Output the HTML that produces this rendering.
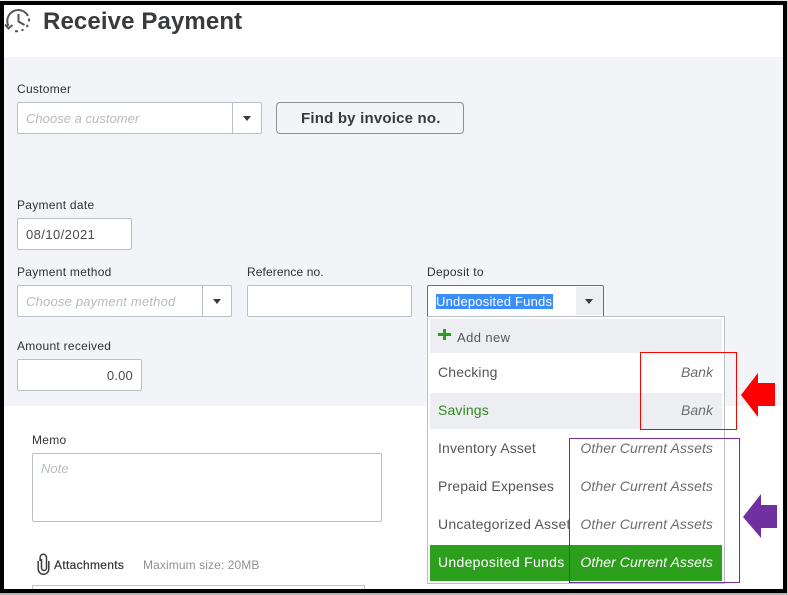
<!DOCTYPE html>
<html><head><meta charset="utf-8"><style>
html,body{margin:0;padding:0}
body{width:788px;height:595px;position:relative;overflow:hidden;background:#fff;font-family:"Liberation Sans",sans-serif;color:#393a3d}
div,span.t{position:absolute;box-sizing:border-box}
.t{white-space:nowrap;line-height:16px;font-size:12.5px}
.l{font-size:12px;color:#2f3033;letter-spacing:.28px}
.box{background:#fff;border:1px solid #babec5;border-radius:2px}
.ph{font-style:italic;color:#b8bac0;font-size:13px;letter-spacing:.03px}
.it{font-size:14px;color:#55565b;letter-spacing:.15px}
.ty{font-size:14px;font-style:italic;color:#6b6c72;letter-spacing:.03px}
.car{width:0;height:0;border-left:4.5px solid transparent;border-right:4.5px solid transparent;border-top:5px solid #393a3d}
.k{background:#000}
</style></head><body>
<div style="left:0;top:57px;width:788px;height:349px;background:#f3f4f8"></div>

<svg style="position:absolute;left:0;top:0" width="36" height="36" viewBox="0 0 36 36" fill="none" stroke="#55565b" stroke-width="2">
<path d="M8.500 26 A10.500 10.500 0 1 1 28 16"/>
<path d="M29 18.500V21.500M28 25 L26.500 27M23.500 29.500L21.500 30.500M18 31.200H15"/>
<path d="M18.500 14V21.500L24.500 25"/>
<path d="M5 24.500L8.500 28.500L12.500 25" stroke-width="2"/>
</svg>
<span class="t" style="left:43px;top:8px;font-size:24px;line-height:28px;font-weight:bold;color:#393a3d;letter-spacing:.12px">Receive Payment</span>

<span class="t l" style="left:17px;top:81px">Customer</span>
<div class="box" style="left:17px;top:102px;width:245px;height:32px"></div>
<div style="left:232px;top:103px;width:1px;height:30px;background:#babec5"></div>
<div class="car" style="left:243px;top:116px"></div>
<span class="t ph" style="left:26px;top:111px">Choose a customer</span>

<div style="left:276px;top:102px;width:188px;height:32px;border:1px solid #8d9096;border-radius:4px"></div>
<span class="t" style="left:301px;top:111px;font-size:15px;font-weight:bold;color:#393a3d;letter-spacing:.2px">Find by invoice no.</span>

<span class="t l" style="left:17px;top:197px">Payment date</span>
<div class="box" style="left:17px;top:218px;width:115px;height:32px"></div>
<span class="t" style="left:26px;top:227px;font-size:13px;letter-spacing:.42px;color:#4a4b50">08/10/2021</span>

<span class="t l" style="left:17px;top:264px">Payment method</span>
<div class="box" style="left:17px;top:285px;width:215px;height:32px"></div>
<div style="left:202px;top:286px;width:1px;height:30px;background:#babec5"></div>
<div class="car" style="left:213px;top:299px"></div>
<span class="t ph" style="left:26px;top:294px;letter-spacing:.2px">Choose payment method</span>

<span class="t l" style="left:247px;top:264px;letter-spacing:.1px">Reference no.</span>
<div class="box" style="left:247px;top:285px;width:165px;height:32px"></div>

<span class="t l" style="left:427px;top:264px">Deposit to</span>
<div style="left:427px;top:285px;width:177px;height:33px;background:#fff;border:1px solid #2ca01c;border-radius:2px"></div>
<div style="left:576px;top:287px;width:27px;height:28px;background:#eceef1"></div>
<div class="car" style="left:585px;top:299px"></div>
<span class="t" style="left:436px;top:294px;height:15px;background:#3b8efa;color:#fff;font-size:13px;line-height:15px;width:117px;letter-spacing:.2px">Undeposited Funds</span>

<span class="t l" style="left:17px;top:338px">Amount received</span>
<div class="box" style="left:17px;top:359px;width:125px;height:32px"></div>
<span class="t" style="right:655px;top:368px;font-size:13px;color:#4a4b50;letter-spacing:.2px">0.00</span>

<span class="t l" style="left:32px;top:432px">Memo</span>
<div class="box" style="left:32px;top:453px;width:350px;height:69px"></div>
<span class="t ph" style="left:41px;top:461px">Note</span>

<svg style="position:absolute;left:37px;top:553px" width="14" height="22" viewBox="0 0 14 22" fill="none" stroke="#393a3d" stroke-width="1.500">
<path d="M4.500 6V15a2.500 2.500 0 0 0 5 0V4.500a3.200 3.200 0 0 0-6.400 0V8"/><path d="M1.200 8V16a5.300 5.300 0 0 0 10.600 0V8"/>
</svg>
<span class="t" style="left:54px;top:557px;font-size:12px;color:#2f3033;-webkit-text-stroke:.2px #393a3d;letter-spacing:.32px">Attachments</span>
<span class="t" style="left:143px;top:557px;font-size:12px;color:#8d9096;letter-spacing:.1px">Maximum size: 20MB</span>
<div style="left:32px;top:585px;width:333px;height:6px;border:1px solid #c4c4c4;border-bottom:0;background:#fff"></div>

<!-- dropdown -->
<div style="left:427px;top:316px;width:298px;height:268px;background:#fff;border:1px solid #babec5"></div>
<div style="left:430px;top:319px;width:292px;height:34px;background:#eceef1"></div>
<div style="left:438px;top:333px;width:13px;height:3px;background:#2ca01c"></div>
<div style="left:443px;top:329px;width:3px;height:11px;background:#2ca01c"></div>
<span class="t" style="left:457px;top:330px;font-size:13px;color:#55565b;letter-spacing:.4px">Add new</span>

<span class="t it" style="left:438px;top:364px">Checking</span>
<span class="t ty" style="right:75px;top:364px">Bank</span>
<div style="left:430px;top:393px;width:292px;height:36px;background:#eceef1"></div>
<span class="t it" style="left:438px;top:402px;color:#2e8a1f">Savings</span>
<span class="t ty" style="right:75px;top:402px">Bank</span>

<span class="t it" style="left:438px;top:440px">Inventory Asset</span>
<span class="t ty" style="right:75px;top:440px;letter-spacing:.08px">Other Current Assets</span>
<span class="t it" style="left:438px;top:478px">Prepaid Expenses</span>
<span class="t ty" style="right:75px;top:478px;letter-spacing:.08px">Other Current Assets</span>
<span class="t it" style="left:438px;top:516px;width:131px;overflow:hidden;letter-spacing:.22px">Uncategorized Asset</span>
<span class="t ty" style="right:75px;top:516px;letter-spacing:.08px">Other Current Assets</span>
<div style="left:430px;top:545px;width:292px;height:36px;background:#2ca01c"></div>
<span class="t it" style="left:438px;top:554px;color:#fff;letter-spacing:.3px">Undeposited Funds</span>
<span class="t ty" style="right:75px;top:554px;color:#fff;letter-spacing:.08px">Other Current Assets</span>

<!-- annotations -->
<div style="left:640px;top:352px;width:97px;height:78px;border:1px solid #f00"></div>
<div style="left:569px;top:438px;width:171px;height:145px;border:1px solid #7030a0"></div>
<svg style="position:absolute;left:740px;top:372px" width="36" height="46"><path d="M1 23L18 1V11H35V34H18V45Z" fill="#f00"/></svg>
<svg style="position:absolute;left:742px;top:493px" width="36" height="46"><path d="M1 24L19 1V12H35V35H19V45Z" fill="#7030a0"/></svg>

<!-- frame -->
<div style="left:0;top:0;width:788px;height:1px;background:#e8e8e8"></div>
<div class="k" style="left:0;top:1px;width:787px;height:4px"></div>
<div class="k" style="left:0;top:1px;width:4px;height:592px"></div>
<div class="k" style="left:783px;top:1px;width:4px;height:592px"></div>
<div class="k" style="left:0;top:589px;width:787px;height:4px"></div>
<div style="left:0;top:593px;width:788px;height:2px;background:#b5b5b5"></div>
<div style="left:787px;top:0;width:1px;height:595px;background:#d0d0d0"></div>
</body></html>
